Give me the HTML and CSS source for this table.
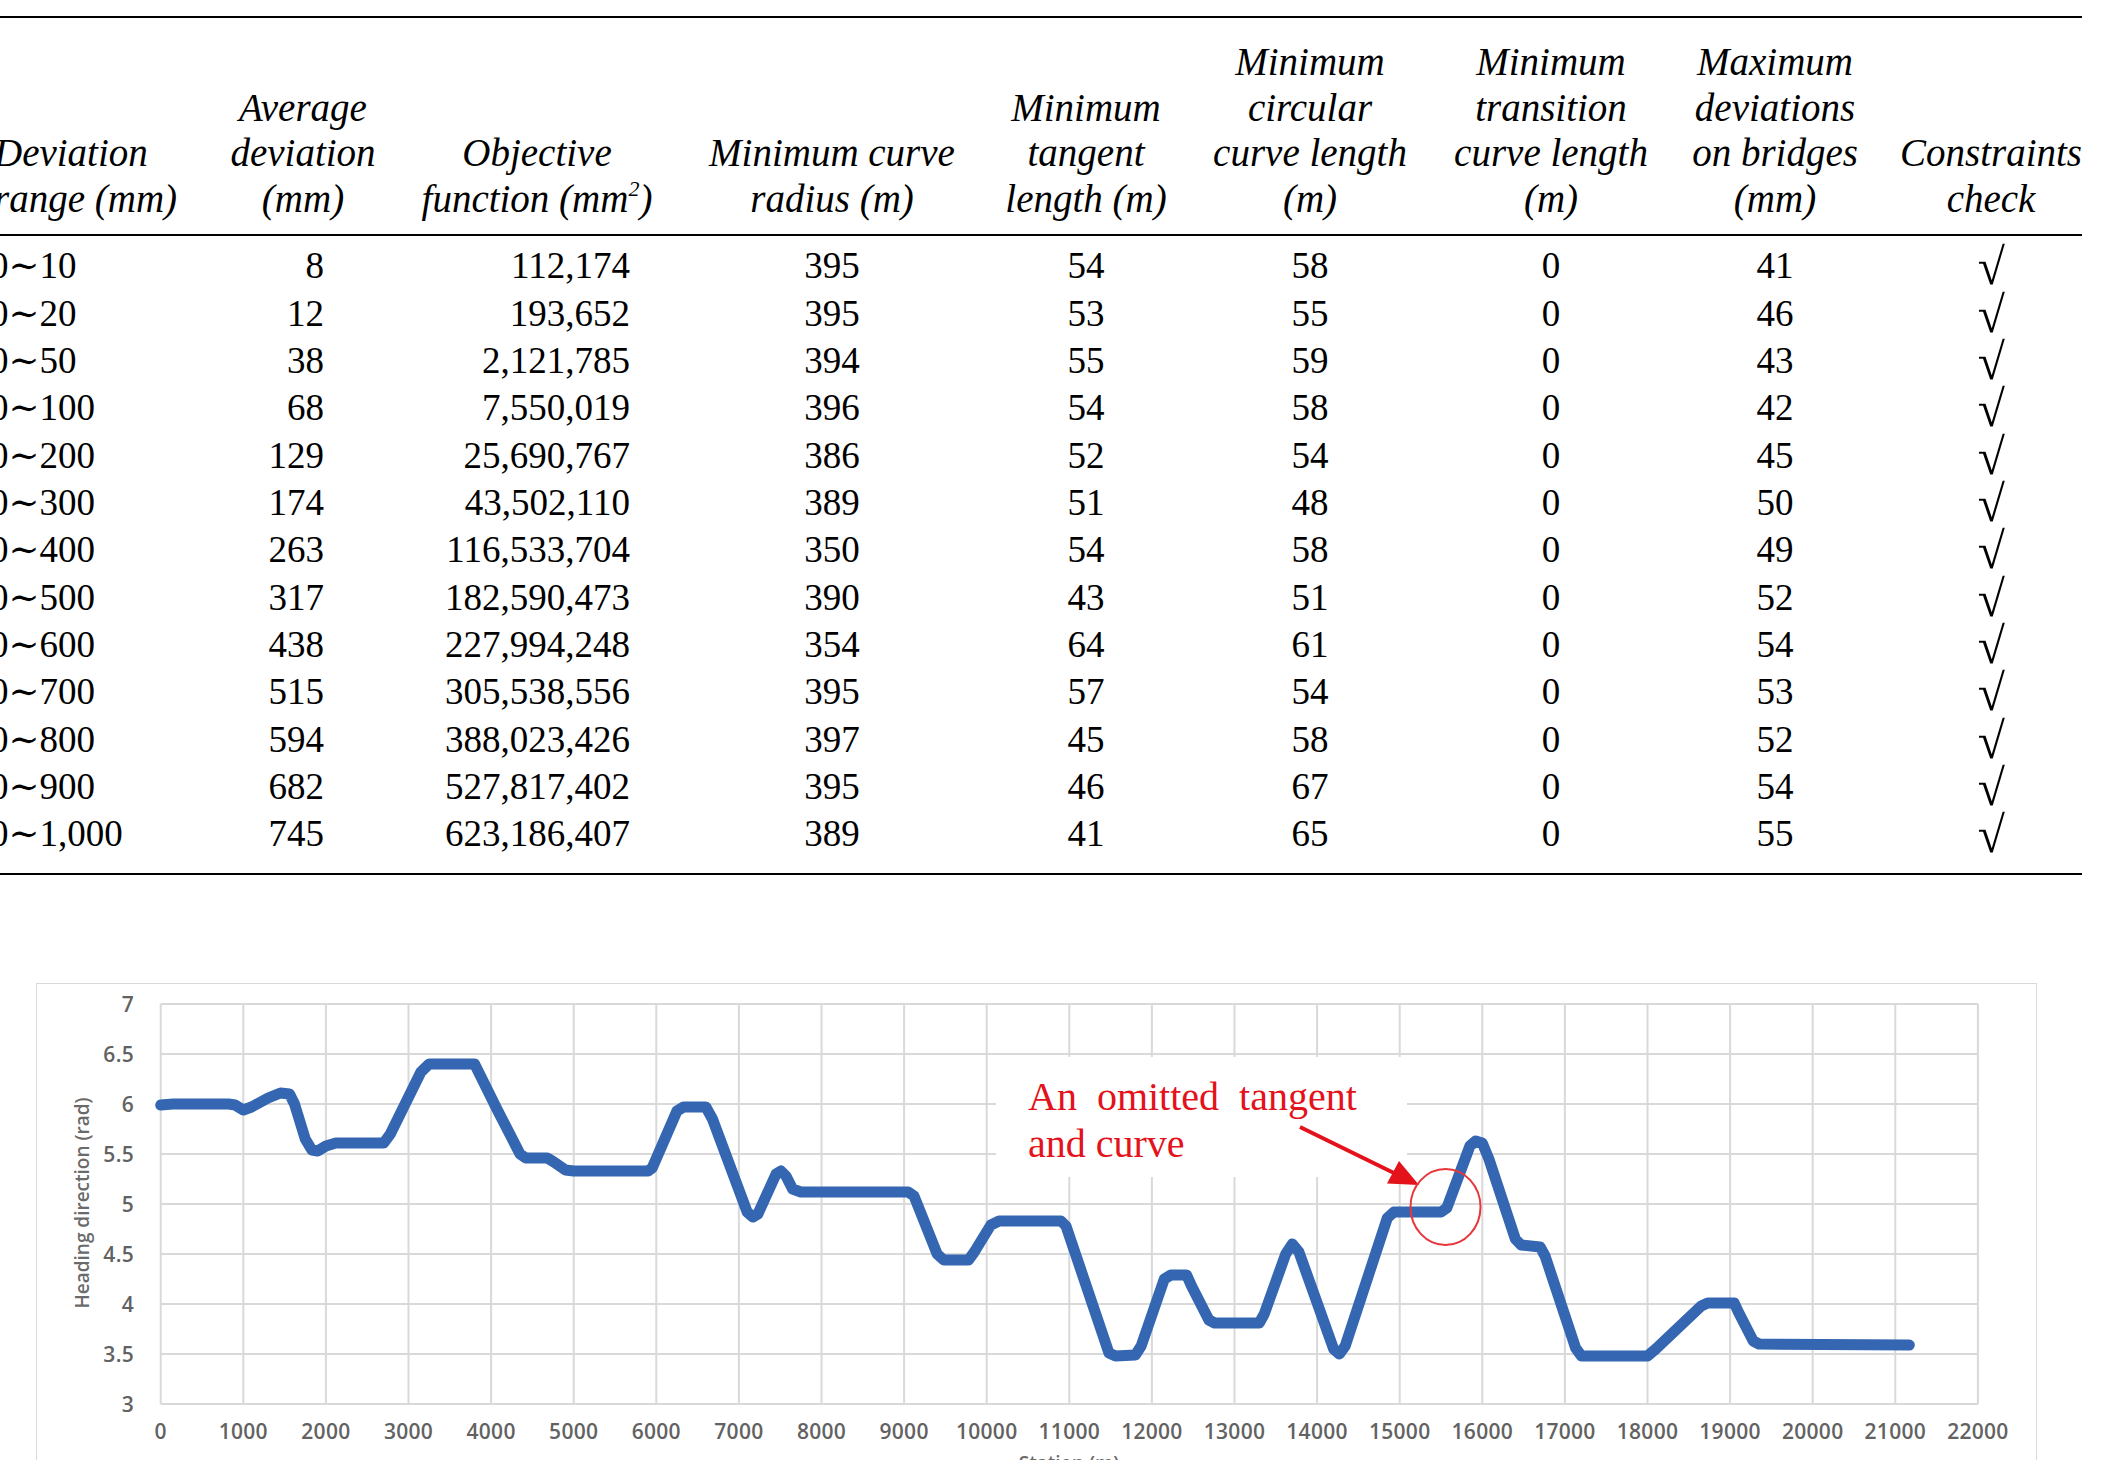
FILE: index.html
```html
<!DOCTYPE html>
<html lang="en">
<head>
<meta charset="utf-8">
<title>Alignment design results</title>
<link rel="stylesheet" href="styles.css">
</head>
<body>
<main class="page">
  <table class="results">
    <colgroup>
      <col class="w-range"><col class="w-avg"><col class="w-obj"><col class="w-radius"><col class="w-tangent"><col class="w-circ"><col class="w-trans"><col class="w-bridge"><col class="w-check">
    </colgroup>
    <thead>
      <tr>
        <th class="h-left">Deviation<br>range (mm)</th>
        <th>Average<br>deviation<br>(mm)</th>
        <th>Objective<br>function (mm<sup>2</sup>)</th>
        <th>Minimum curve<br>radius (m)</th>
        <th>Minimum<br>tangent<br>length (m)</th>
        <th>Minimum<br>circular<br>curve length<br>(m)</th>
        <th>Minimum<br>transition<br>curve length<br>(m)</th>
        <th>Maximum<br>deviations<br>on bridges<br>(mm)</th>
        <th>Constraints<br>check</th>
      </tr>
    </thead>
    <tbody>
      <tr><td class="range">0∼10</td><td class="avg">8</td><td class="obj">112,174</td><td>395</td><td>54</td><td>58</td><td>0</td><td>41</td><td class="check"><span class="tick">√</span></td></tr>
      <tr><td class="range">0∼20</td><td class="avg">12</td><td class="obj">193,652</td><td>395</td><td>53</td><td>55</td><td>0</td><td>46</td><td class="check"><span class="tick">√</span></td></tr>
      <tr><td class="range">0∼50</td><td class="avg">38</td><td class="obj">2,121,785</td><td>394</td><td>55</td><td>59</td><td>0</td><td>43</td><td class="check"><span class="tick">√</span></td></tr>
      <tr><td class="range">0∼100</td><td class="avg">68</td><td class="obj">7,550,019</td><td>396</td><td>54</td><td>58</td><td>0</td><td>42</td><td class="check"><span class="tick">√</span></td></tr>
      <tr><td class="range">0∼200</td><td class="avg">129</td><td class="obj">25,690,767</td><td>386</td><td>52</td><td>54</td><td>0</td><td>45</td><td class="check"><span class="tick">√</span></td></tr>
      <tr><td class="range">0∼300</td><td class="avg">174</td><td class="obj">43,502,110</td><td>389</td><td>51</td><td>48</td><td>0</td><td>50</td><td class="check"><span class="tick">√</span></td></tr>
      <tr><td class="range">0∼400</td><td class="avg">263</td><td class="obj">116,533,704</td><td>350</td><td>54</td><td>58</td><td>0</td><td>49</td><td class="check"><span class="tick">√</span></td></tr>
      <tr><td class="range">0∼500</td><td class="avg">317</td><td class="obj">182,590,473</td><td>390</td><td>43</td><td>51</td><td>0</td><td>52</td><td class="check"><span class="tick">√</span></td></tr>
      <tr><td class="range">0∼600</td><td class="avg">438</td><td class="obj">227,994,248</td><td>354</td><td>64</td><td>61</td><td>0</td><td>54</td><td class="check"><span class="tick">√</span></td></tr>
      <tr><td class="range">0∼700</td><td class="avg">515</td><td class="obj">305,538,556</td><td>395</td><td>57</td><td>54</td><td>0</td><td>53</td><td class="check"><span class="tick">√</span></td></tr>
      <tr><td class="range">0∼800</td><td class="avg">594</td><td class="obj">388,023,426</td><td>397</td><td>45</td><td>58</td><td>0</td><td>52</td><td class="check"><span class="tick">√</span></td></tr>
      <tr><td class="range">0∼900</td><td class="avg">682</td><td class="obj">527,817,402</td><td>395</td><td>46</td><td>67</td><td>0</td><td>54</td><td class="check"><span class="tick">√</span></td></tr>
      <tr><td class="range">0∼1,000</td><td class="avg">745</td><td class="obj">623,186,407</td><td>389</td><td>41</td><td>65</td><td>0</td><td>55</td><td class="check"><span class="tick">√</span></td></tr>
    </tbody>
  </table>

  <figure class="chart">
    <svg class="chart-svg" width="1999" height="476" viewBox="37 984 1999 476" xmlns="http://www.w3.org/2000/svg">
      <g class="grid">
        <path d="M160.7 1004H1977.9M160.7 1054H1977.9M160.7 1104H1977.9M160.7 1154H1977.9M160.7 1204H1977.9M160.7 1254H1977.9M160.7 1304H1977.9M160.7 1354H1977.9M160.7 1404H1977.9"/>
        <path d="M160.7 1004V1404M243.3 1004V1404M325.9 1004V1404M408.5 1004V1404M491.1 1004V1404M573.7 1004V1404M656.3 1004V1404M738.9 1004V1404M821.5 1004V1404M904.1 1004V1404M986.7 1004V1404M1069.3 1004V1404M1151.9 1004V1404M1234.5 1004V1404M1317.1 1004V1404M1399.7 1004V1404M1482.3 1004V1404M1564.9 1004V1404M1647.5 1004V1404M1730.1 1004V1404M1812.7 1004V1404M1895.3 1004V1404M1977.9 1004V1404"/>
      </g>
      <g class="ylabels">
        <text x="134" y="1011.5">7</text>
        <text x="134" y="1061.5">6.5</text>
        <text x="134" y="1111.5">6</text>
        <text x="134" y="1161.5">5.5</text>
        <text x="134" y="1211.5">5</text>
        <text x="134" y="1261.5">4.5</text>
        <text x="134" y="1311.5">4</text>
        <text x="134" y="1361.5">3.5</text>
        <text x="134" y="1411.5">3</text>
      </g>
      <g class="xlabels">
        <text x="160.7" y="1438.5">0</text>
        <text x="243.3" y="1438.5">1000</text>
        <text x="325.9" y="1438.5">2000</text>
        <text x="408.5" y="1438.5">3000</text>
        <text x="491.1" y="1438.5">4000</text>
        <text x="573.7" y="1438.5">5000</text>
        <text x="656.3" y="1438.5">6000</text>
        <text x="738.9" y="1438.5">7000</text>
        <text x="821.5" y="1438.5">8000</text>
        <text x="904.1" y="1438.5">9000</text>
        <text x="986.7" y="1438.5">10000</text>
        <text x="1069.3" y="1438.5">11000</text>
        <text x="1151.9" y="1438.5">12000</text>
        <text x="1234.5" y="1438.5">13000</text>
        <text x="1317.1" y="1438.5">14000</text>
        <text x="1399.7" y="1438.5">15000</text>
        <text x="1482.3" y="1438.5">16000</text>
        <text x="1564.9" y="1438.5">17000</text>
        <text x="1647.5" y="1438.5">18000</text>
        <text x="1730.1" y="1438.5">19000</text>
        <text x="1812.7" y="1438.5">20000</text>
        <text x="1895.3" y="1438.5">21000</text>
        <text x="1977.9" y="1438.5">22000</text>
      </g>
      <text class="axis-title" transform="translate(89 1203) rotate(-90)">Heading direction (rad)</text>
      <text class="axis-title" x="1069" y="1470">Station (m)</text>

      <rect class="note-bg" x="996" y="1057" width="411" height="120"/>

      <g transform="translate(160.7 1704) scale(0.0826 -100)">
        <polyline class="heading" vector-effect="non-scaling-stroke" points="0,5.99 150,6.0 820,6.0 900,5.99 1000,5.94 1100,5.97 1300,6.06 1450,6.11 1560,6.10 1620,6.0 1750,5.65 1830,5.54 1900,5.53 2000,5.58 2120,5.61 2700,5.61 2780,5.70 3150,6.32 3250,6.40 3800,6.40 3860,6.30 4070,5.95 4350,5.50 4420,5.46 4680,5.46 4760,5.42 4900,5.34 5000,5.33 5900,5.33 5950,5.36 6250,5.93 6330,5.97 6600,5.97 6680,5.85 7100,4.92 7170,4.87 7230,4.90 7450,5.30 7510,5.33 7570,5.28 7650,5.15 7750,5.12 9050,5.12 9120,5.08 9400,4.50 9480,4.44 9780,4.44 9850,4.52 10050,4.79 10150,4.83 10900,4.83 10960,4.78 11480,3.51 11560,3.48 11800,3.49 11870,3.58 12150,4.25 12230,4.29 12420,4.29 12480,4.18 12690,3.84 12760,3.81 13300,3.81 13360,3.90 13620,4.50 13700,4.60 13780,4.52 14200,3.55 14270,3.50 14340,3.58 14850,4.86 14930,4.92 15500,4.92 15570,4.96 15850,5.58 15920,5.63 16000,5.61 16080,5.45 16400,4.65 16470,4.59 16700,4.57 16760,4.48 17130,3.56 17200,3.48 18000,3.48 18100,3.55 18650,3.98 18730,4.01 19050,4.01 19100,3.92 19280,3.63 19350,3.60 21170,3.59"/>
      </g>

      <text class="note" x="1028" y="1110">An  omitted  tangent</text>
      <text class="note" x="1028" y="1157">and curve</text>
      <line class="arrow" x1="1300" y1="1127" x2="1396" y2="1174"/>
      <polygon class="arrow-head" points="1419,1185 1387,1183.5 1399,1161"/>
      <ellipse class="mark" cx="1445.5" cy="1207" rx="35" ry="38"/>
    </svg>
  </figure>
</main>
</body>
</html>
```

FILE: styles.css
```css
html, body {
  margin: 0;
  padding: 0;
  background: #ffffff;
  overflow: hidden;
}

.page {
  display: flex;
  flex-direction: column;
  align-items: flex-start;
  padding-top: 16px;
}

.results {
  margin-left: -10px;
  width: 2092px;
  table-layout: fixed;
  border-collapse: separate;
  border-spacing: 0;
  font-family: "Liberation Serif", "DejaVu Serif", serif;
  color: #000;
}

.w-range { width: 202px; }
.w-avg { width: 222px; }
.w-obj { width: 246px; }
.w-radius { width: 344px; }
.w-tangent { width: 164px; }
.w-circ { width: 284px; }
.w-trans { width: 198px; }
.w-bridge { width: 250px; }
.w-check { width: 182px; }

.results th {
  font-style: italic;
  font-weight: normal;
  font-size: 39px;
  line-height: 45.67px;
  text-align: center;
  vertical-align: bottom;
  white-space: nowrap;
  padding: 21px 0 12px;
  border-top: 2px solid #000;
  border-bottom: 2px solid #000;
}

.results th.h-left {
  text-align: left;
  padding-left: 4px;
}

.results th sup {
  font-size: 22px;
  line-height: 0;
  vertical-align: 16px;
}

.results td {
  font-size: 37px;
  line-height: 47.33px;
  padding: 0;
  text-align: center;
  white-space: nowrap;
}

.tick {
  display: inline-block;
  font-size: 38px;
  line-height: 40px;
  transform: translateY(1px) scale(1.3, 1.35);
}

.results tbody tr:first-child td {
  padding-top: 6.6px;
}

.results tbody tr:last-child td {
  padding-bottom: 15.3px;
  border-bottom: 2px solid #000;
}

.results td.range {
  text-align: left;
}

.results td.avg {
  text-align: right;
  padding-right: 90px;
}

.results td.obj {
  text-align: right;
  padding-right: 30px;
}

.chart {
  margin: 108px 0 0 36px;
  width: 1999px;
  height: 500px;
  border: 1px solid #d9d9d9;
  background: #ffffff;
}

.chart-svg {
  display: block;
}

.grid path {
  fill: none;
  stroke: #d9d9d9;
  stroke-width: 2;
}

.ylabels text,
.xlabels text {
  font-family: "Open Sans", "Liberation Sans", sans-serif;
  font-size: 21px;
  font-weight: 600;
  fill: #626262;
  letter-spacing: 0.3px;
}

.ylabels text { text-anchor: end; }
.xlabels text { text-anchor: middle; }

.axis-title {
  font-family: "Open Sans", "Liberation Sans", sans-serif;
  font-size: 19px;
  font-weight: 600;
  fill: #6a6a6a;
  text-anchor: middle;
}

.note-bg {
  fill: #ffffff;
}

.heading {
  fill: none;
  stroke: #3466b2;
  stroke-width: 11;
  stroke-linejoin: round;
  stroke-linecap: round;
}

.note {
  font-family: "Liberation Serif", "DejaVu Serif", serif;
  font-size: 40px;
  fill: #e3121b;
  white-space: pre;
}

.arrow {
  stroke: #e3121b;
  stroke-width: 4;
}

.arrow-head {
  fill: #e3121b;
}

.mark {
  fill: none;
  stroke: #e8363a;
  stroke-width: 2;
}
```
